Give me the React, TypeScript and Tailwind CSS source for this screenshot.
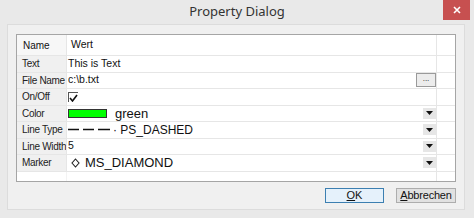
import React from 'react';

type Row = { label: string; kind: 'text' | 'file' | 'check' | 'color' | 'line' | 'width' | 'marker' };

const rows: Row[] = [
  { label: 'Text', kind: 'text' },
  { label: 'File Name', kind: 'file' },
  { label: 'On/Off', kind: 'check' },
  { label: 'Color', kind: 'color' },
  { label: 'Line Type', kind: 'line' },
  { label: 'Line Width', kind: 'width' },
  { label: 'Marker', kind: 'marker' },
];

function DropArrow() {
  return (
    <div className="flex h-[11px] w-[13px] items-center justify-center bg-[#e6e6e6]">
      <svg width="7" height="4" viewBox="0 0 7 4">
        <path d="M0 0h7L3.5 4z" fill="#111" />
      </svg>
    </div>
  );
}

function Value({ kind }: { kind: Row['kind'] }) {
  switch (kind) {
    case 'text':
      return <span>This is Text</span>;
    case 'file':
      return <span>c:\b.txt</span>;
    case 'check':
      return (
        <div className="mt-[1px] flex h-[10px] w-[10px] items-center justify-center border-l border-t border-[#555]">
          <svg width="9" height="8" viewBox="0 0 9 8">
            <path d="M1 4l2.5 3L8 1" stroke="#111" strokeWidth="1.6" fill="none" />
          </svg>
        </div>
      );
    case 'color':
      return (
        <div className="flex items-center gap-[8px]">
          <div className="h-[9px] w-[39px] border border-[#333] bg-[#00ff00]" />
          <span className="text-[13px]">green</span>
        </div>
      );
    case 'line':
      return (
        <div className="flex items-center gap-[3px]">
          <svg width="42" height="3" viewBox="0 0 42 3">
            <path d="M0 1.5h11M15 1.5h11M30 1.5h12" stroke="#111" strokeWidth="1.6" />
          </svg>
          <span className="text-[12px]">· PS_DASHED</span>
        </div>
      );
    case 'width':
      return <span>5</span>;
    case 'marker':
      return (
        <div className="flex items-center gap-[5px] pl-[3px]">
          <svg width="9" height="10" viewBox="0 0 9 10">
            <path d="M4.5 1L8 5L4.5 9L1 5z" stroke="#222" strokeWidth="1.1" fill="none" />
          </svg>
          <span className="text-[13px]">MS_DIAMOND</span>
        </div>
      );
  }
}

export default function App() {
  return (
    <div
      className="flex h-[218px] w-[474px] flex-col bg-[#e9e9e9] text-[#111]"
      style={{ fontFamily: '"Liberation Sans", Arial, sans-serif' }}
    >
      {/* Title bar */}
      <div className="relative flex h-[24px] shrink-0 items-center justify-center">
        <span className="text-[13px] text-[#333]" style={{ fontFamily: '"Noto Sans", sans-serif' }}>
          Property Dialog
        </span>
        <button className="absolute right-[4px] top-0 flex h-[20px] w-[27px] items-center justify-center bg-[#c75050]">
          <svg width="8" height="8" viewBox="0 0 8 8">
            <path d="M1 1l6 6M7 1L1 7" stroke="#fff" strokeWidth="1.6" />
          </svg>
        </button>
      </div>

      {/* Client area */}
      <div className="ml-[7px] mr-[9px] flex h-[186px] flex-col border border-[#dcdcdc] bg-[#f0f0f0] px-[8px] pt-[9px]">
        <div className="grid h-[148px] grid-cols-[50px_1fr_18px] grid-rows-[21px_repeat(7,16.5px)_1fr] border border-[#a5a5a5] bg-white text-[11px]">
          <div className="flex items-center border-b border-r border-[#e6e6e6] bg-[#f7f7f7] pl-[6px] text-[10px]">Name</div>
          <div className="flex items-center border-b border-r border-[#e6e6e6] pl-[4px] text-[10.5px]">Wert</div>
          <div className="border-b border-[#e6e6e6]" />
          {rows.map((r) => (
            <React.Fragment key={r.label}>
              <div className="flex items-center overflow-hidden whitespace-nowrap border-b border-r border-[#e6e6e6] bg-[#f0f0f0] pl-[5px] text-[10px] tracking-[-0.3px] text-[#222]">
                {r.label}
              </div>
              <div className="flex items-center justify-between border-b border-r border-[#e6e6e6] pl-[1px] text-[10.5px]">
                <Value kind={r.kind} />
                {r.kind === 'file' && (
                  <div className="flex h-[14px] w-[20px] items-end justify-center border border-[#9a9a9a] bg-[#ececec] pb-[3px] text-[8px] leading-none">
                    ...
                  </div>
                )}
                {['color', 'line', 'width', 'marker'].includes(r.kind) && <DropArrow />}
              </div>
              <div className="border-b border-[#e6e6e6]" />
            </React.Fragment>
          ))}
          <div className="border-r border-[#f3f3f3]" />
          <div className="border-r border-[#e6e6e6]" />
          <div />
        </div>

        <div className="flex flex-1 items-center justify-end gap-[12px] text-[11px]">
          <button className="flex h-[15px] w-[59px] items-center justify-center border border-[#3c7fb1] bg-[#e5f1fb]">
            <span className="underline decoration-1 underline-offset-1">O</span>K
          </button>
          <button className="flex h-[15px] w-[60px] items-center justify-center border border-[#adadad] bg-[#e1e1e1] tracking-[-0.2px]">
            <span className="underline decoration-1 underline-offset-1">A</span>bbrechen
          </button>
        </div>
      </div>
    </div>
  );
}
